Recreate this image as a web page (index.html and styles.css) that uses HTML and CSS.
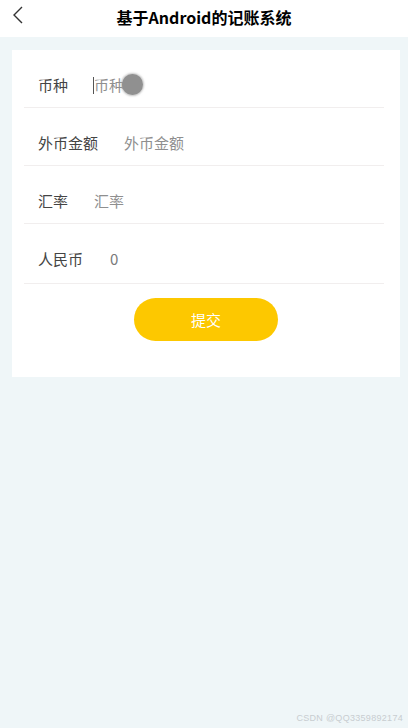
FILE: index.html
```html
<!DOCTYPE html>
<html lang="zh">
<head>
<meta charset="utf-8">
<title>基于Android的记账系统</title>
<link rel="stylesheet" href="styles.css">
</head>
<body>
<div class="app">
  <header class="topbar">
    <span class="back">
      <svg width="12" height="18" viewBox="0 0 12 18"><path d="M10 1 L2 9 L10 17" fill="none" stroke="#333" stroke-width="1.4"/></svg>
    </span>
    <h1 class="title">基于Android的记账系统</h1>
  </header>
  <main class="card">
    <div class="row first">
      <span class="label">币种</span>
      <span class="value placeholder focus"><span class="caret"></span>币种<span class="handle"></span></span>
    </div>
    <div class="row">
      <span class="label">外币金额</span>
      <span class="value placeholder">外币金额</span>
    </div>
    <div class="row">
      <span class="label">汇率</span>
      <span class="value placeholder">汇率</span>
    </div>
    <div class="row last">
      <span class="label">人民币</span>
      <span class="value num">0</span>
    </div>
    <div class="actions">
      <button class="submit">提交</button>
    </div>
  </main>
  <div class="watermark">CSDN @QQ3359892174</div>
</div>
</body>
</html>
```
FILE: styles.css
```css
* { box-sizing: border-box; }
html, body { margin: 0; padding: 0; }
body {
  background: #eff6f8;
  font-family: "Noto Sans CJK SC", "Noto Sans", sans-serif;
  width: 408px;
  height: 728px;
  overflow: hidden;
}
.app { position: relative; height: 728px; }
.topbar {
  height: 37px;
  background: #fff;
  display: flex;
  align-items: center;
  justify-content: center;
  position: relative;
}
.back {
  position: absolute;
  left: 12px;
  top: 6px;
  display: flex;
}
.title {
  margin: 0;
  font-size: 16px;
  font-weight: bold;
  color: #000;
  line-height: 22px;
  margin-top: -4px;
}
.card {
  background: #fff;
  margin: 13px 8px 0 12px;
  padding-bottom: 36px;
}
.row {
  margin: 0 16px 0 12px;
  height: 58px;
  border-bottom: 1px solid #f1eeee;
  display: flex;
  align-items: flex-end;
  padding-bottom: 10px;
  padding-left: 14px;
  font-size: 15px;
  line-height: 24px;
}
.row.last { height: 60px; padding-bottom: 12px; }
.label { color: #444; }
.value { margin-left: 26px; position: relative; }
.placeholder { color: #8f8f8f; }
.num { color: #7a7a7a; margin-left: 27px; }
.caret {
  display: inline-block;
  width: 1px;
  height: 17px;
  background: #555;
  vertical-align: -3px;
  margin-left: -1px;
}
.handle {
  position: absolute;
  left: 28px;
  top: 1px;
  width: 21px;
  height: 21px;
  border-radius: 50%;
  background: #909090;
  box-shadow: 0 0 2px 1px rgba(160,160,160,0.6);
}
.actions {
  display: flex;
  justify-content: center;
  padding-top: 14px;
}
.submit {
  width: 144px;
  height: 43px;
  border: none;
  border-radius: 22px;
  background: #fdc800;
  color: #fff;
  font-family: inherit;
  font-size: 15px;
  padding: 0;
}
.watermark {
  position: absolute;
  right: 5px;
  bottom: 5px;
  font-family: "Liberation Sans", sans-serif;
  font-size: 9px;
  color: #c8cdd0;
  letter-spacing: 0.3px;
}
```
